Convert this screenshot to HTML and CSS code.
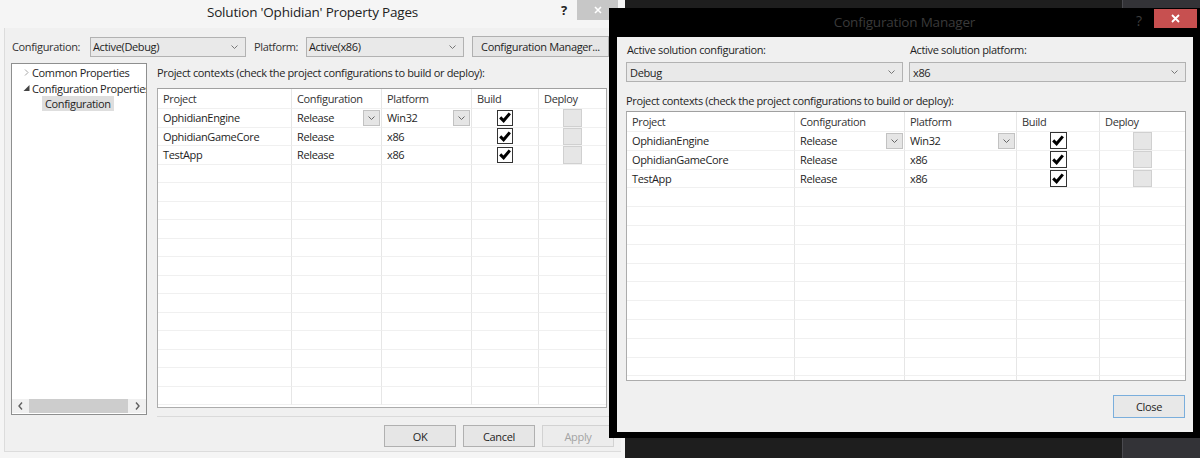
FILE: index.html
```html
<!DOCTYPE html>
<html>
<head>
<meta charset="utf-8">
<title>Solution 'Ophidian' Property Pages</title>
<link rel="stylesheet" href="styles.css">
</head>
<body>
<div class="desk">
  <div class="vs-strip"></div>

  <section class="win win-props">
    <div class="titlebar">
      <span class="title">Solution 'Ophidian' Property Pages</span>
      <span class="help">?</span>
      <span class="close"><svg width="8" height="8" viewBox="0 0 8 8"><path d="M1 1 L7 7 M7 1 L1 7" stroke="#fff" stroke-width="1.6"/></svg></span>
    </div>
    <div class="client">
      <div class="toprow">
        <span class="lbl lbl-config">Configuration:</span>
        <div class="combo combo-config"><span>Active(Debug)</span><svg class="chev" width="7" height="4" viewBox="0 0 7 4"><path d="M0.5 0.5 L3.5 3.5 L6.5 0.5" fill="none" stroke="#777" stroke-width="1"/></svg></div>
        <span class="lbl lbl-plat">Platform:</span>
        <div class="combo combo-plat"><span>Active(x86)</span><svg class="chev" width="7" height="4" viewBox="0 0 7 4"><path d="M0.5 0.5 L3.5 3.5 L6.5 0.5" fill="none" stroke="#777" stroke-width="1"/></svg></div>
        <div class="btn btn-cm">Configuration Manager...</div>
      </div>

      <div class="main">
        <div class="tree">
          <ul class="tree-list">
            <li class="node"><svg class="tw" width="5" height="7" viewBox="0 0 5 7"><path d="M1 0.5 L4 3.5 L1 6.5" fill="none" stroke="#a6a6a6" stroke-width="1"/></svg><span>Common Properties</span></li>
            <li class="node"><svg class="tw" width="6" height="6" viewBox="0 0 6 6"><path d="M6 0 L6 6 L0 6 Z" fill="#444"/></svg><span>Configuration Properties</span></li>
            <li class="node child"><span class="sel">Configuration</span></li>
          </ul>
          <div class="hscroll">
            <span class="sarr"><svg width="5" height="8" viewBox="0 0 5 8"><path d="M4 0.5 L1 4 L4 7.5" fill="none" stroke="#606060" stroke-width="1.4"/></svg></span>
            <span class="thumb"></span>
            <span class="sarr"><svg width="5" height="8" viewBox="0 0 5 8"><path d="M1 0.5 L4 4 L1 7.5" fill="none" stroke="#606060" stroke-width="1.4"/></svg></span>
          </div>
        </div>

        <div class="page">
          <div class="hint">Project contexts (check the project configurations to build or deploy):</div>
          <div class="grid grid-left">
            <div class="grow head">
              <div class="c">Project</div><div class="c">Configuration</div><div class="c">Platform</div><div class="c">Build</div><div class="c">Deploy</div>
            </div>
            <div class="grow">
              <div class="c">OphidianEngine</div>
              <div class="c dd">Release<span class="ddb"><svg width="7" height="4" viewBox="0 0 7 4"><path d="M0.5 0.5 L3.5 3.5 L6.5 0.5" fill="none" stroke="#666" stroke-width="1"/></svg></span></div>
              <div class="c dd">Win32<span class="ddb"><svg width="7" height="4" viewBox="0 0 7 4"><path d="M0.5 0.5 L3.5 3.5 L6.5 0.5" fill="none" stroke="#666" stroke-width="1"/></svg></span></div>
              <div class="c ctr"><span class="chk"><svg width="12" height="11" viewBox="0 0 12 11"><path d="M1.2 5.4 L4.6 8.8 L10.8 1.4" fill="none" stroke="#000" stroke-width="3"/></svg></span></div>
              <div class="c ctr"><span class="dis"></span></div>
            </div>
            <div class="grow">
              <div class="c">OphidianGameCore</div><div class="c">Release</div><div class="c">x86</div>
              <div class="c ctr"><span class="chk"><svg width="12" height="11" viewBox="0 0 12 11"><path d="M1.2 5.4 L4.6 8.8 L10.8 1.4" fill="none" stroke="#000" stroke-width="3"/></svg></span></div>
              <div class="c ctr"><span class="dis"></span></div>
            </div>
            <div class="grow">
              <div class="c">TestApp</div><div class="c">Release</div><div class="c">x86</div>
              <div class="c ctr"><span class="chk"><svg width="12" height="11" viewBox="0 0 12 11"><path d="M1.2 5.4 L4.6 8.8 L10.8 1.4" fill="none" stroke="#000" stroke-width="3"/></svg></span></div>
              <div class="c ctr"><span class="dis"></span></div>
            </div>
            <div class="grow"><div class="c"></div><div class="c"></div><div class="c"></div><div class="c"></div><div class="c"></div></div>
            <div class="grow"><div class="c"></div><div class="c"></div><div class="c"></div><div class="c"></div><div class="c"></div></div>
            <div class="grow"><div class="c"></div><div class="c"></div><div class="c"></div><div class="c"></div><div class="c"></div></div>
            <div class="grow"><div class="c"></div><div class="c"></div><div class="c"></div><div class="c"></div><div class="c"></div></div>
            <div class="grow"><div class="c"></div><div class="c"></div><div class="c"></div><div class="c"></div><div class="c"></div></div>
            <div class="grow"><div class="c"></div><div class="c"></div><div class="c"></div><div class="c"></div><div class="c"></div></div>
            <div class="grow"><div class="c"></div><div class="c"></div><div class="c"></div><div class="c"></div><div class="c"></div></div>
            <div class="grow"><div class="c"></div><div class="c"></div><div class="c"></div><div class="c"></div><div class="c"></div></div>
            <div class="grow"><div class="c"></div><div class="c"></div><div class="c"></div><div class="c"></div><div class="c"></div></div>
            <div class="grow"><div class="c"></div><div class="c"></div><div class="c"></div><div class="c"></div><div class="c"></div></div>
            <div class="grow"><div class="c"></div><div class="c"></div><div class="c"></div><div class="c"></div><div class="c"></div></div>
            <div class="grow"><div class="c"></div><div class="c"></div><div class="c"></div><div class="c"></div><div class="c"></div></div>
            <div class="grow"><div class="c"></div><div class="c"></div><div class="c"></div><div class="c"></div><div class="c"></div></div>
          </div>
        </div>
      </div>

      <div class="buttons">
        <div class="btn btn-dlg">OK</div>
        <div class="btn btn-dlg">Cancel</div>
        <div class="btn btn-dlg disabled">Apply</div>
      </div>
    </div>
  </section>

  <section class="win win-cm">
    <div class="titlebar dark">
      <span class="title">Configuration Manager</span>
      <span class="help">?</span>
      <span class="close red"><svg width="9" height="9" viewBox="0 0 9 9"><path d="M1 1 L8 8 M8 1 L1 8" stroke="#fff" stroke-width="1.8"/></svg></span>
    </div>
    <div class="panel">
      <div class="sol-row">
        <div class="field">
          <div class="flbl">Active solution configuration:</div>
          <div class="combo"><span>Debug</span><svg class="chev" width="7" height="4" viewBox="0 0 7 4"><path d="M0.5 0.5 L3.5 3.5 L6.5 0.5" fill="none" stroke="#777" stroke-width="1"/></svg></div>
        </div>
        <div class="field">
          <div class="flbl">Active solution platform:</div>
          <div class="combo"><span>x86</span><svg class="chev" width="7" height="4" viewBox="0 0 7 4"><path d="M0.5 0.5 L3.5 3.5 L6.5 0.5" fill="none" stroke="#777" stroke-width="1"/></svg></div>
        </div>
      </div>
      <div class="hint hint-cm">Project contexts (check the project configurations to build or deploy):</div>
      <div class="grid grid-right">
        <div class="grow head">
          <div class="c">Project</div><div class="c">Configuration</div><div class="c">Platform</div><div class="c">Build</div><div class="c">Deploy</div>
        </div>
        <div class="grow">
          <div class="c">OphidianEngine</div>
          <div class="c dd">Release<span class="ddb"><svg width="7" height="4" viewBox="0 0 7 4"><path d="M0.5 0.5 L3.5 3.5 L6.5 0.5" fill="none" stroke="#666" stroke-width="1"/></svg></span></div>
          <div class="c dd">Win32<span class="ddb"><svg width="7" height="4" viewBox="0 0 7 4"><path d="M0.5 0.5 L3.5 3.5 L6.5 0.5" fill="none" stroke="#666" stroke-width="1"/></svg></span></div>
          <div class="c ctr"><span class="chk"><svg width="12" height="11" viewBox="0 0 12 11"><path d="M1.2 5.4 L4.6 8.8 L10.8 1.4" fill="none" stroke="#000" stroke-width="3"/></svg></span></div>
          <div class="c ctr"><span class="dis"></span></div>
        </div>
        <div class="grow">
          <div class="c">OphidianGameCore</div><div class="c">Release</div><div class="c">x86</div>
          <div class="c ctr"><span class="chk"><svg width="12" height="11" viewBox="0 0 12 11"><path d="M1.2 5.4 L4.6 8.8 L10.8 1.4" fill="none" stroke="#000" stroke-width="3"/></svg></span></div>
          <div class="c ctr"><span class="dis"></span></div>
        </div>
        <div class="grow">
          <div class="c">TestApp</div><div class="c">Release</div><div class="c">x86</div>
          <div class="c ctr"><span class="chk"><svg width="12" height="11" viewBox="0 0 12 11"><path d="M1.2 5.4 L4.6 8.8 L10.8 1.4" fill="none" stroke="#000" stroke-width="3"/></svg></span></div>
          <div class="c ctr"><span class="dis"></span></div>
        </div>
        <div class="grow"><div class="c"></div><div class="c"></div><div class="c"></div><div class="c"></div><div class="c"></div></div>
        <div class="grow"><div class="c"></div><div class="c"></div><div class="c"></div><div class="c"></div><div class="c"></div></div>
        <div class="grow"><div class="c"></div><div class="c"></div><div class="c"></div><div class="c"></div><div class="c"></div></div>
        <div class="grow"><div class="c"></div><div class="c"></div><div class="c"></div><div class="c"></div><div class="c"></div></div>
        <div class="grow"><div class="c"></div><div class="c"></div><div class="c"></div><div class="c"></div><div class="c"></div></div>
        <div class="grow"><div class="c"></div><div class="c"></div><div class="c"></div><div class="c"></div><div class="c"></div></div>
        <div class="grow"><div class="c"></div><div class="c"></div><div class="c"></div><div class="c"></div><div class="c"></div></div>
        <div class="grow"><div class="c"></div><div class="c"></div><div class="c"></div><div class="c"></div><div class="c"></div></div>
        <div class="grow"><div class="c"></div><div class="c"></div><div class="c"></div><div class="c"></div><div class="c"></div></div>
        <div class="grow"><div class="c"></div><div class="c"></div><div class="c"></div><div class="c"></div><div class="c"></div></div>
        <div class="grow"><div class="c"></div><div class="c"></div><div class="c"></div><div class="c"></div><div class="c"></div></div>
      </div>
      <div class="cm-foot">
        <div class="btn btn-dlg btn-focus">Close</div>
      </div>
    </div>
  </section>
</div>
</body>
</html>
```

FILE: styles.css
```css
* { box-sizing: border-box; }

html, body {
  margin: 0;
  padding: 0;
}

body {
  width: 1200px;
  height: 458px;
  overflow: hidden;
  background: #1e1e1e;
  font-family: "Open Sans", "Noto Sans", sans-serif;
  font-size: 11px;
  letter-spacing: -0.35px;
  color: #1e1e1e;
}

.desk {
  position: relative;
  width: 1200px;
  height: 458px;
  overflow: hidden;
}

.vs-strip {
  position: absolute;
  left: 1122px;
  top: 0;
  width: 78px;
  height: 458px;
  background: #333337;
  border-left: 1px solid #4a4a4f;
}

/* ---------- windows ---------- */
.win {
  position: absolute;
}

.titlebar {
  position: relative;
  height: 28px;
  display: flex;
  align-items: flex-start;
  justify-content: center;
}

.titlebar .title {
  font-size: 13.5px;
  letter-spacing: -0.2px;
  line-height: 24px;
  color: #222;
}

.titlebar .help {
  position: absolute;
  top: 1px;
  font-size: 13px;
  font-weight: bold;
  color: #222;
  line-height: 18px;
}

.titlebar .close {
  position: absolute;
  top: 0;
  display: flex;
  align-items: center;
  justify-content: center;
}

/* left: property pages */
.win-props {
  left: 0;
  top: 0;
  width: 625px;
  height: 458px;
  background: #f5f5f5;
}

.win-props .titlebar .help { left: 561px; }
.win-props .titlebar .close {
  left: 577px;
  width: 41px;
  height: 20px;
  background: #c7c7c7;
}

.client {
  margin-left: 4px;
  width: 617px;
  height: 424px;
  background: #f0f0f0;
  border-left: 1px solid #dcdcdc;
  border-bottom: 1px solid #dcdcdc;
  padding-top: 8px;
}

.toprow {
  display: flex;
  align-items: center;
  height: 21px;
  padding-left: 7px;
}

.lbl {
  color: #333;
  white-space: nowrap;
}

.lbl-config { width: 78px; }
.lbl-plat { width: 52px; margin-left: 8px; }

.combo {
  height: 20px;
  background: #e9e9e9;
  border: 1px solid #b2b2b2;
  display: flex;
  align-items: center;
  justify-content: space-between;
  padding: 0 7px 0 2px;
  color: #1e1e1e;
}

.combo-config { width: 156px; }
.combo-plat { width: 158px; }

.btn {
  display: flex;
  align-items: center;
  justify-content: center;
  background: #e6e6e6;
  border: 1px solid #b0b0b0;
  color: #1e1e1e;
  white-space: nowrap;
}

.btn-cm {
  margin-left: 8px;
  width: 137px;
  height: 21px;
}

.main {
  display: flex;
  margin-top: 6px;
}

.tree {
  margin-left: 6px;
  width: 136px;
  height: 352px;
  background: #fff;
  border: 1px solid #8e8f8f;
  display: flex;
  flex-direction: column;
  justify-content: space-between;
  overflow: hidden;
}

.tree-list {
  list-style: none;
  margin: 0;
  padding: 1px 0 0 0;
}

.node {
  display: flex;
  align-items: center;
  height: 15.5px;
  white-space: nowrap;
  color: #1e1e1e;
}

.node .tw {
  margin-left: 9px;
  width: 11px;
  flex: 0 0 11px;
}

.node.child .sel {
  margin-left: 30px;
  padding: 0 3px;
  background: #dedede;
  line-height: 15px;
}

.hscroll {
  display: flex;
  height: 14px;
  margin-bottom: 1px;
  background: #f0f0f0;
}

.sarr {
  width: 17px;
  display: flex;
  align-items: center;
  justify-content: center;
}

.thumb {
  flex: 1;
  background: #cdcdcd;
  margin-right: 1px;
}

.page {
  margin-left: 10px;
  width: 452px;
  height: 354px;
  border-bottom: 1px solid #dadada;
}

.hint {
  margin-top: 3px;
  line-height: 14px;
  color: #1e1e1e;
  white-space: nowrap;
}

/* ---------- project grid ---------- */
.grid {
  background: #fff;
  border: 1px solid #acacac;
  border-top-color: #a0a0a0;
  overflow: hidden;
}

.grid-left {
  margin-top: 8px;
  width: 450px;
  height: 320px;
}

.grow {
  display: grid;
  height: 18.5px;
}

.grow.head { height: 20px; }

.grid-left .grow {
  grid-template-columns: 134px 90px 90px 67px 67px;
}

.grid-right .grow {
  grid-template-columns: 168px 110px 112px 83px 85px;
  height: 18.8px;
}
.grid-right .grow.head { height: 20px; }

.c {
  border-right: 1px solid #e6e6e6;
  border-bottom: 1px solid #f0f0f0;
  padding-left: 5px;
  display: flex;
  align-items: center;
  white-space: nowrap;
  overflow: hidden;
  color: #1e1e1e;
}

.c:last-child { border-right: none; }

.head .c { color: #333; }

.c.dd {
  justify-content: space-between;
  padding-right: 1px;
}

.ddb {
  width: 17px;
  height: 16px;
  background: #e5e5e5;
  border: 1px solid #c2c2c2;
  display: flex;
  align-items: center;
  justify-content: center;
}

.c.ctr {
  justify-content: center;
  padding-left: 0;
}

.chk {
  width: 16px;
  height: 16px;
  background: #fff;
  border: 1px solid #333;
  display: flex;
  align-items: center;
  justify-content: center;
}

.grid-right .chk {
  width: 17px;
  height: 17px;
}

.dis {
  width: 19px;
  height: 17.5px;
  background: #e6e6e6;
  border: 1px solid #d0d0d0;
}

/* ---------- bottom buttons ---------- */
.buttons {
  display: flex;
  justify-content: flex-end;
  gap: 7px;
  margin-top: 8px;
  padding-right: 7px;
}

.btn-dlg {
  width: 72px;
  height: 22px;
}

.btn.disabled {
  color: #a3a3a3;
  border-color: #d2d2d2;
  background: #ececec;
}

/* right: configuration manager */
.win-cm {
  left: 609px;
  top: 8px;
  width: 591px;
  height: 430px;
  background: #000;
}

.titlebar.dark { height: 29px; }

.titlebar.dark .title {
  color: #3a3a3a;
  font-size: 13.5px;
  line-height: 28px;
}

.titlebar.dark .help {
  left: 527px;
  top: 4px;
  color: #3d3d3d;
  font-weight: normal;
  font-size: 14px;
}

.titlebar .close.red {
  left: 545px;
  top: 1px;
  width: 43px;
  height: 19px;
  background: #c75050;
}

.panel {
  margin-left: 8px;
  width: 576px;
  height: 395px;
  background: #f0f0f0;
  padding: 6px 7px 0 9px;
}

.sol-row {
  display: grid;
  grid-template-columns: 277px 277px;
  column-gap: 6px;
}

.flbl {
  line-height: 14px;
  padding-left: 1px;
  color: #1e1e1e;
}

.field .combo {
  margin-top: 5px;
  padding-left: 3px;
}

.hint-cm {
  margin-top: 12px;
  margin-left: 0;
}

.grid-right {
  margin-top: 3px;
  width: 560px;
  height: 270px;
}

.cm-foot {
  display: flex;
  justify-content: flex-end;
  margin-top: 14px;
  padding-right: 1px;
}

.btn-focus {
  height: 23px;
  border-color: #7aaedc;
  background: #e8e8e8;
}
```
